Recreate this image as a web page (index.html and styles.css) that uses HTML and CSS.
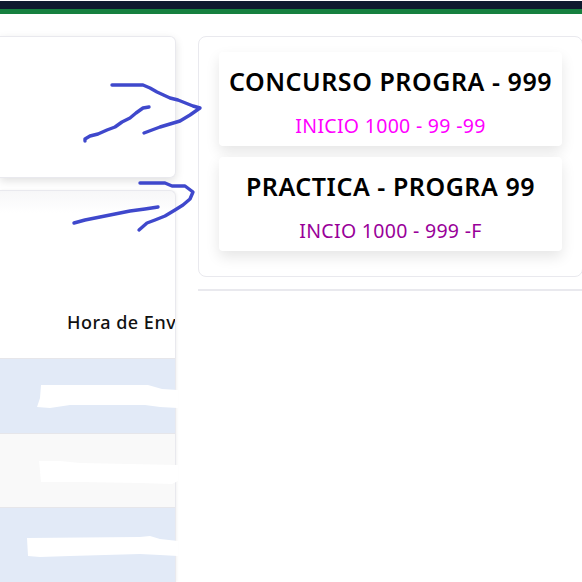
FILE: index.html
```html
<!DOCTYPE html>
<html lang="es">
<head>
    <meta charset="UTF-8">
    <meta name="viewport" content="width=device-width, initial-scale=1.0">
    <title>Programas</title>
    <link rel="stylesheet" href="styles.css">
</head>
<body>
    <div class="barra-top"></div>
    <div class="contenido">
        <div class="col-izq">
            <div class="tarjeta tarjeta-vacia"></div>
            <div class="tarjeta tarjeta-tabla">
                <div class="tabla-head"><span>Hora de Envío</span></div>
                <div class="fila fila-azul"></div>
                <div class="fila fila-gris"></div>
                <div class="fila fila-azul"></div>
            </div>
        </div>
        <div class="col-der">
            <div class="panel">
                <div class="programa">
                    <h3>CONCURSO PROGRA - 999</h3>
                    <p class="inicio-a">INICIO 1000 - 99 -99</p>
                </div>
                <div class="programa">
                    <h3>PRACTICA - PROGRA 99</h3>
                    <p class="inicio-b">INCIO 1000 - 999 -F</p>
                </div>
            </div>
            <div class="divisor"></div>
        </div>
    </div>

    <!-- marcas hechas a mano encima de la captura -->
    <svg class="marcas" width="582" height="582" viewBox="0 0 582 582">
        <g class="borrones">
            <path d="M41,385 L148,385 L162,389 L178,390 L178,408 L160,407 L145,405 L70,405 L50,408 L37,407 L40,398 Z"/>
            <path d="M39,461 L60,461 L80,463 L178,465 L178,481 L172,484 L140,483 L80,482 L41,482 Z"/>
            <path d="M27,538 L140,537 L150,536 L160,539 L178,541 L178,556 L160,555 L140,554 L70,556 L40,557 L28,556 Z"/>
        </g>
        <g class="flechas">
            <path d="M112,85 L143,85 L150,88 L157,92 L170,98 L178,100 L193,106 L200,108 L190,115 L180,121 L170,124 L160,127 L152,130 L144,133"/>
            <path d="M149,107 L143,108 L136,113 L130,118 L122,122 L115,127 L107,130 L98,134 L90,136 L85,139 L85,141"/>
            <path d="M140,183 L165,183 L172,186 L185,186 L193,192 L190,199 L183,205 L175,210 L165,216 L155,220 L147,223 L139,230"/>
            <path d="M158,207 L145,209 L130,211 L115,214 L100,217 L85,220 L74,223"/>
        </g>
    </svg>
</body>
</html>
```

FILE: styles.css
```css
* {
    margin: 0;
    padding: 0;
    box-sizing: border-box;
}

body {
    font-family: "Noto Sans", "Open Sans", sans-serif;
    background-color: #fff;
    width: 582px;
    height: 582px;
    overflow: hidden;
    position: relative;
}

.barra-top {
    height: 13px;
    margin-top: 1px;
    background-color: #0f1a2e;
    border-bottom: 5px solid #16803f;
}

.contenido {
    display: grid;
    grid-template-columns: 176px 1fr;
    column-gap: 22px;
    padding-top: 22px;
}

.col-izq {
    height: 546px;
    display: flex;
    flex-direction: column;
    gap: 12px;
}

.tarjeta {
    background-color: #fff;
    border: 1px solid #e9e9ee;
    border-left: 0;
    border-radius: 0 6px 0 0;
}

.tarjeta-vacia {
    height: 142px;
    border-radius: 0 6px 6px 0;
    box-shadow: 0 3px 8px rgba(0, 0, 0, 0.12);
    position: relative;
}

.tarjeta-tabla {
    flex: 1;
    overflow: hidden;
    border-bottom: 0;
    box-shadow: 1px 0 3px rgba(0, 0, 0, 0.05);
    background-image: linear-gradient(#f7f7f8, #fff 22px);
}

.tabla-head {
    height: 167px;
    padding-top: 120px;
    padding-left: 67px;
    font-size: 18px;
    font-weight: 500;
    line-height: 22px;
    letter-spacing: 0.5px;
    color: #111;
    white-space: nowrap;
    overflow: hidden;
}

.fila {
    height: 74.5px;
    border-top: 1px solid #e6e6ea;
}

.fila-azul {
    background-color: #e2eaf7;
}

.fila-gris {
    background-color: #f9f9f9;
}

.panel {
    height: 241px;
    padding: 15px 20px 0 20px;
    border: 1px solid #e9e9ee;
    border-radius: 8px;
    display: flex;
    flex-direction: column;
    gap: 11px;
    margin-right: -1px;
}

.programa {
    height: 94px;
    background-color: #fff;
    border-radius: 4px;
    box-shadow: 0 6px 14px rgba(0, 0, 0, 0.1);
    text-align: center;
    padding-top: 14px;
}

.programa h3 {
    font-size: 25px;
    font-weight: 600;
    line-height: 30px;
    letter-spacing: 0.55px;
    color: #000;
    white-space: nowrap;
}

.programa p {
    font-size: 19.5px;
    line-height: 24px;
    margin-top: 18px;
    letter-spacing: 0.3px;
    white-space: nowrap;
}

.inicio-a {
    color: #ff00ff;
}

.inicio-b {
    color: #990099;
}

.divisor {
    height: 2px;
    margin-top: 12px;
    background-color: #e9e9ee;
}

.marcas {
    position: absolute;
    top: 0;
    left: 0;
}

.borrones path {
    fill: #fff;
}

.flechas path {
    fill: none;
    stroke: #3f48cc;
    stroke-width: 3.4;
    stroke-linecap: round;
    stroke-linejoin: round;
}
```
